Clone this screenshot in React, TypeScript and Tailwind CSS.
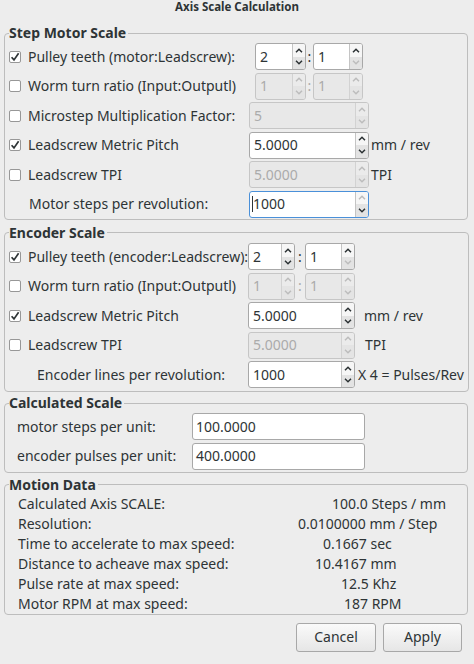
import React from "react";

const Chevron = ({ dir, on }: { dir: "up" | "down"; on: boolean }) => (
  <svg width="8" height="5" viewBox="0 0 8 5" className="block">
    <polyline
      points={dir === "up" ? "1,4.2 4,1.2 7,4.2" : "1,0.8 4,3.8 7,0.8"}
      fill="none"
      stroke={on ? "#2e3436" : "#bdbdbd"}
      strokeWidth="1.5"
    />
  </svg>
);

type SpinProps = {
  value: string;
  width: string;
  disabled?: boolean;
  up?: boolean;
  down?: boolean;
  focused?: boolean;
};

const SpinBox = ({ value, width, disabled, up = true, down = true, focused }: SpinProps) => (
  <div
    className={`${width} flex h-[27px] overflow-hidden rounded-[3px] border ${
      focused ? "border-[#4a90d9]" : disabled ? "border-[#c6c6c6]" : "border-[#a8a8a8]"
    } ${disabled ? "bg-[#e8e8e8]" : "bg-white"}`}
  >
    <div className={`flex flex-1 items-center ${focused ? "pl-[2px]" : "pl-[4px]"} ${disabled ? "text-[#ababab]" : ""}`}>
      {focused && <span className="h-[16px] w-px bg-[#2e3436]" />}
      {value}
    </div>
    <div className={`flex w-[13px] flex-col border-l ${disabled ? "border-[#d2d2d2]" : "border-[#c4c4c4]"}`}>
      <div className={`flex flex-1 items-center justify-center ${disabled ? "bg-[#ebebeb]" : "bg-[#f6f6f6]"}`}>
        <Chevron dir="up" on={!disabled && up} />
      </div>
      <div className={`flex flex-1 items-center justify-center ${disabled ? "bg-[#e4e4e4]" : "bg-[#e3e3e3]"}`}>
        <Chevron dir="down" on={!disabled && down} />
      </div>
    </div>
  </div>
);

const Check = ({ on }: { on: boolean }) => (
  <span className="flex h-[12px] w-[12px] shrink-0 items-center justify-center rounded-[2px] border border-[#979797] bg-white">
    {on && (
      <svg width="10" height="10" viewBox="0 0 10 10">
        <path d="M1.6 5.2 L4 7.9 L8.6 1.3" fill="none" stroke="#2e3436" strokeWidth="1.7" />
      </svg>
    )}
  </span>
);

const CheckLabel = ({ on, text }: { on: boolean; text: string }) => (
  <div className="flex h-[27px] items-center gap-[7px] whitespace-nowrap">
    <Check on={on} />
    <span>{text}</span>
  </div>
);

const Group = ({ title, className, children }: { title: string; className: string; children: React.ReactNode }) => (
  <fieldset className={`rounded-[4px] border border-[#bdbdbd] px-[4px] ${className}`}>
    <legend className="pr-[2px] text-[14px] font-bold leading-[14px]">{title}</legend>
    {children}
  </fieldset>
);

const Pair = ({ a, b, disabled, w1, colon, w2 }: { a: string; b: string; disabled?: boolean; w1: string; colon: string; w2: string }) => (
  <div className="flex items-center">
    <SpinBox value={a} width={w1} disabled={disabled} />
    <span className={`${colon} text-center ${disabled ? "text-[#ababab]" : ""}`}>:</span>
    <SpinBox value={b} width={w2} disabled={disabled} down={false} />
  </div>
);

const motion = [
  { label: "Calculated Axis SCALE:", value: "100.0 Steps / mm", pad: "pl-[34px]" },
  { label: "Resolution:", value: "0.0100000 mm / Step", pad: "pl-[0px]" },
  { label: "Time to accelerate to max speed:", value: "0.1667 sec", pad: "pl-[25px]" },
  { label: "Distance to acheave max speed:", value: "10.4167 mm", pad: "pl-[17px]" },
  { label: "Pulse rate at max speed:", value: "12.5 Khz", pad: "pl-[43px]" },
  { label: "Motor RPM at max speed:", value: "187 RPM", pad: "pl-[46px]" },
];

export default function App() {
  return (
    <div className="h-[664px] w-[474px] overflow-hidden bg-[#ededed] font-['Noto_Sans',sans-serif] text-[14px] leading-[18px] text-[#2e3436]">
      <div className="text-center text-[11.5px] font-bold leading-[13px]">Axis Scale Calculation</div>

      <div className="pl-[4px] pr-[6px]">
        {/* Step motor */}
        <Group title="Step Motor Scale" className="mt-[13px] pb-[1px] pt-[3px]">
          <div className="grid grid-cols-[240px_120px_1fr] items-center gap-y-[2.5px]">
            <CheckLabel on text="Pulley teeth (motor:Leadscrew):" />
            <div className="flex justify-center">
              <Pair a="2" b="1" w1="w-[51px]" colon="w-[7px]" w2="w-[50px]" />
            </div>
            <div />

            <CheckLabel on={false} text="Worm turn ratio (Input:Outputl)" />
            <div className="flex justify-center">
              <Pair a="1" b="1" disabled w1="w-[51px]" colon="w-[7px]" w2="w-[50px]" />
            </div>
            <div />

            <CheckLabel on={false} text="Microstep Multiplication Factor:" />
            <SpinBox value="5" width="w-[120px]" disabled />
            <div />

            <CheckLabel on text="Leadscrew Metric Pitch" />
            <SpinBox value="5.0000" width="w-[120px]" />
            <span className="whitespace-nowrap pl-[2px]">mm / rev</span>

            <CheckLabel on={false} text="Leadscrew TPI" />
            <SpinBox value="5.0000" width="w-[120px]" disabled />
            <span className="pl-[2px]">TPI</span>

            <div className="flex h-[27px] items-center whitespace-nowrap pl-[20px]">Motor steps per revolution:</div>
            <SpinBox value="1000" width="w-[120px]" focused up={false} />
            <div />
          </div>
        </Group>

        {/* Encoder */}
        <Group title="Encoder Scale" className="mt-[6px] pb-[3px] pt-[3.5px]">
          <div className="grid grid-cols-[239px_107px_1fr] items-center gap-y-[2.5px]">
            <CheckLabel on text="Pulley teeth (encoder:Leadscrew):" />
            <Pair a="2" b="1" w1="w-[47px]" colon="w-[10px]" w2="w-[50px]" />
            <div />

            <CheckLabel on={false} text="Worm turn ratio (Input:Outputl)" />
            <Pair a="1" b="1" disabled w1="w-[47px]" colon="w-[10px]" w2="w-[50px]" />
            <div />

            <CheckLabel on text="Leadscrew Metric Pitch" />
            <SpinBox value="5.0000" width="w-[107px]" />
            <span className="whitespace-nowrap pl-[9px]">mm / rev</span>

            <CheckLabel on={false} text="Leadscrew TPI" />
            <SpinBox value="5.0000" width="w-[107px]" disabled />
            <span className="pl-[10px]">TPI</span>

            <div className="flex h-[27px] items-center whitespace-nowrap pl-[28px]">Encoder lines per revolution:</div>
            <SpinBox value="1000" width="w-[107px]" />
            <span className="whitespace-nowrap pl-[3px]">X 4 = Pulses/Rev</span>
          </div>
        </Group>

        {/* Calculated */}
        <Group title="Calculated Scale" className="mt-[4px] pb-[2px] pt-[3px]">
          <div className="grid grid-cols-[183px_173px] items-center gap-y-[2.5px]">
            <span className="pl-[8px]">motor steps per unit:</span>
            <div className="flex h-[27px] items-center rounded-[3px] border border-[#a8a8a8] bg-white pl-[3px]">100.0000</div>
            <span className="pl-[8px]">encoder pulses per unit:</span>
            <div className="flex h-[27px] items-center rounded-[3px] border border-[#a8a8a8] bg-white pl-[3px]">400.0000</div>
          </div>
        </Group>

        {/* Motion data */}
        <Group title="Motion Data" className="mt-[5px] pt-[2px]">
          {motion.map((m) => (
            <div key={m.label} className="flex h-[20px] items-center whitespace-nowrap">
              <span className="w-[289px] pl-[9px]">{m.label}</span>
              <span className={m.pad}>{m.value}</span>
            </div>
          ))}
        </Group>

        <div className="mr-[6px] mt-[8px] flex justify-end gap-[7px]">
          <button className="h-[29px] w-[80px] rounded-[3px] border border-[#a8a8a8] bg-gradient-to-b from-[#fafafa] to-[#e6e6e6]">
            Cancel
          </button>
          <button className="h-[29px] w-[79px] rounded-[3px] border border-[#a8a8a8] bg-gradient-to-b from-[#fafafa] to-[#e6e6e6]">
            Apply
          </button>
        </div>
      </div>
    </div>
  );
}
